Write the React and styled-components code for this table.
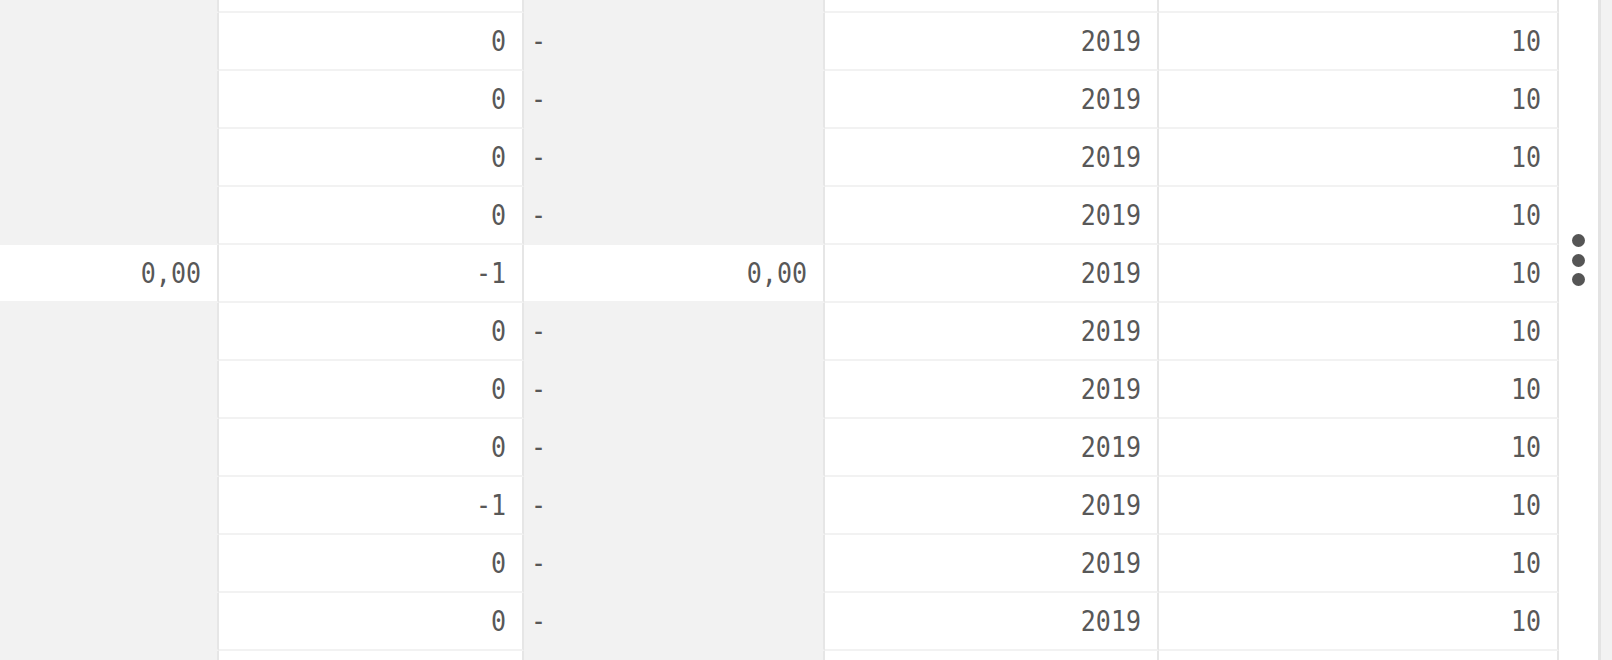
import React from 'react';
import styled, { createGlobalStyle } from 'styled-components';

const Global = createGlobalStyle`
  html, body { margin: 0; padding: 0; background: #f2f2f2; }
  body { font-family: "DejaVu Sans Mono", "Liberation Mono", monospace; }
`;

const Page = styled.div`
  display: flex;
  height: 660px;
  overflow: hidden;
  background: #f2f2f2;
`;

const Viewport = styled.div`
  width: 1559px;
  height: 660px;
  overflow: hidden;
  flex: none;
`;

const Body = styled.div`
  margin-top: -45px;
  display: flex;
  flex-direction: column;
`;

const Row = styled.div`
  display: grid;
  grid-template-columns: 219px 305px 301px 334px 400px;
  height: 58px;
`;

const Cell = styled.div`
  box-sizing: border-box;
  height: 58px;
  border-right: 2px solid #e6e6e6;
  border-bottom: 2px solid #f2f2f2;
  background: ${p => (p.$empty ? '#f2f2f2' : '#ffffff')};
  display: flex;
  align-items: center;
  justify-content: ${p => (p.$left ? 'flex-start' : 'flex-end')};
  padding: 0 16px 0 7px;
  font-size: 25px;
  color: #585858;
  white-space: nowrap;
`;

const Text = styled.span`
  display: inline-block;
  transform: scaleY(1.12);
  line-height: 1;
`;

const Side = styled.div`
  width: 39px;
  flex: none;
  background: #ffffff;
  border-right: 3px solid #e3e3e3;
  display: flex;
  flex-direction: column;
  align-items: center;
  padding-top: 234px;
  gap: 6.5px;
  box-sizing: content-box;
`;

const Dot = styled.span`
  width: 13px;
  height: 13px;
  border-radius: 50%;
  background: #555555;
  display: block;
`;

const rows = [
  { a: '0', partial: true },
  { a: '0' },
  { a: '0' },
  { a: '0' },
  { a: '0' },
  { a: '-1', total: true },
  { a: '0' },
  { a: '0' },
  { a: '0' },
  { a: '-1' },
  { a: '0' },
  { a: '0' },
  { a: '0', partial: true },
];

const show = (r, v) => (r.partial ? null : <Text>{v}</Text>);

export default function App() {
  return (
    <>
      <Global />
      <Page>
        <Viewport>
          <Body>
            {rows.map((r, i) => (
              <Row key={i}>
                {r.total ? <Cell>{show(r, '0,00')}</Cell> : <Cell $empty />}
                <Cell>{show(r, r.a)}</Cell>
                {r.total ? (
                  <Cell>{show(r, '0,00')}</Cell>
                ) : (
                  <Cell $empty $left>{show(r, '-')}</Cell>
                )}
                <Cell>{show(r, '2019')}</Cell>
                <Cell>{show(r, '10')}</Cell>
              </Row>
            ))}
          </Body>
        </Viewport>
        <Side>
          <Dot />
          <Dot />
          <Dot />
        </Side>
      </Page>
    </>
  );
}
